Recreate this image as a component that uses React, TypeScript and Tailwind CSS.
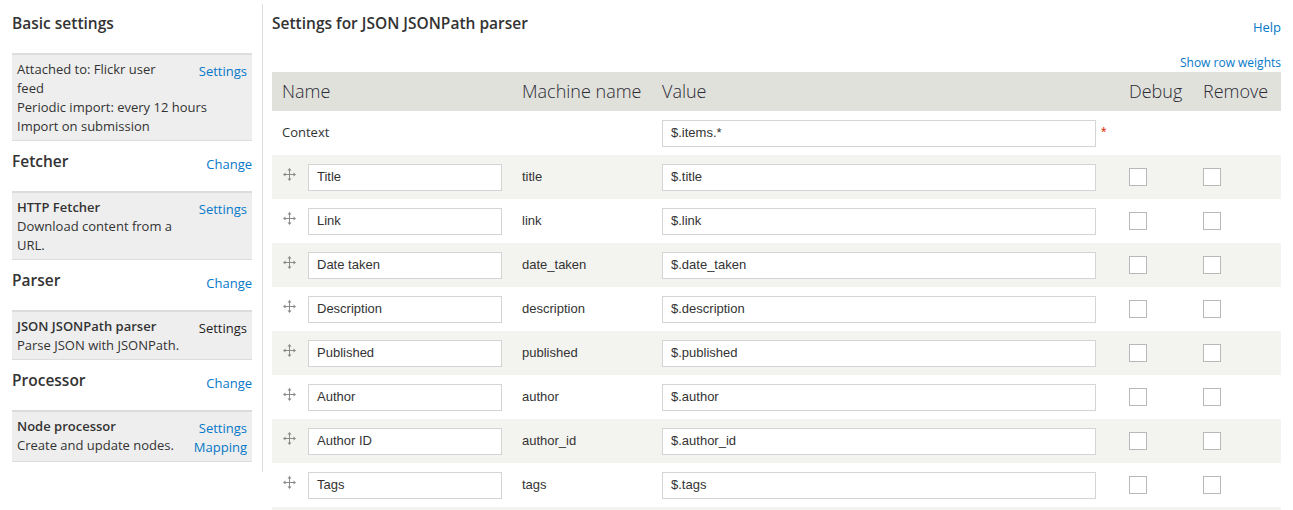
import React from 'react';

const openSans = { fontFamily: '"Open Sans", "Noto Sans", sans-serif' };
const arial = { fontFamily: '"Liberation Sans", Arial, sans-serif' };

type Mapping = { name: string; machine: string; value: string };

const mappings: Mapping[] = [
  { name: 'Title', machine: 'title', value: '$.title' },
  { name: 'Link', machine: 'link', value: '$.link' },
  { name: 'Date taken', machine: 'date_taken', value: '$.date_taken' },
  { name: 'Description', machine: 'description', value: '$.description' },
  { name: 'Published', machine: 'published', value: '$.published' },
  { name: 'Author', machine: 'author', value: '$.author' },
  { name: 'Author ID', machine: 'author_id', value: '$.author_id' },
  { name: 'Tags', machine: 'tags', value: '$.tags' },
];

// Four-way drag handle
function DragHandle() {
  return (
    <svg width="13" height="13" viewBox="0 0 13 13" className="shrink-0">
      <g fill="#8a8a8a">
        <rect x="6" y="1.5" width="1" height="10" />
        <rect x="1.5" y="6" width="10" height="1" />
        <polygon points="6.5,0 8.5,2.5 4.5,2.5" />
        <polygon points="6.5,13 8.5,10.5 4.5,10.5" />
        <polygon points="0,6.5 2.5,4.5 2.5,8.5" />
        <polygon points="13,6.5 10.5,4.5 10.5,8.5" />
      </g>
    </svg>
  );
}

function Checkbox() {
  return <div className="h-[18px] w-[18px] border border-[#b8b8b8] bg-white" />;
}

function SectionHeading({ title, action }: { title: string; action?: string }) {
  return (
    <div className="flex items-end justify-between h-[20px] mb-5">
      <h2 className="text-[15.5px] leading-[20px] font-semibold text-[#333]">{title}</h2>
      {action && (
        <a className="text-[13px] leading-[18px] text-[#0678c8] translate-y-[2px]">{action}</a>
      )}
    </div>
  );
}

function PluginBox({
  links,
  linkIsCurrent,
  children,
}: {
  links: string[];
  linkIsCurrent?: boolean;
  children: React.ReactNode;
}) {
  return (
    <div className="bg-[#eeeeee] border-t-2 border-b border-[#dcdcdc] px-[5px] pt-[5px] pb-[4px] text-[13px] leading-[19px] text-[#333] mb-[10px]">
      <div className="float-right flex flex-col items-end ml-2 pt-[2px] min-h-[38px]">
        {links.map((l) => (
          <a key={l} className={linkIsCurrent ? 'text-[#222]' : 'text-[#0678c8]'}>
            {l}
          </a>
        ))}
      </div>
      {children}
      <div className="clear-both" />
    </div>
  );
}

function Sidebar() {
  return (
    <aside
      className="w-[263px] shrink-0 self-start pl-3 pr-[10px] pt-[9px] border-r border-[#dddddd]"
      style={openSans}
    >
      <SectionHeading title="Basic settings" />
      <PluginBox links={['Settings']}>
        <div className="whitespace-nowrap">Attached to: Flickr user</div>
        <div>feed</div>
        <div className="whitespace-nowrap">Periodic import: every 12 hours</div>
        <div>Import on submission</div>
      </PluginBox>

      <SectionHeading title="Fetcher" action="Change" />
      <PluginBox links={['Settings']}>
        <div className="font-semibold">HTTP Fetcher</div>
        <div className="whitespace-nowrap">Download content from a</div>
        <div>URL.</div>
      </PluginBox>

      <SectionHeading title="Parser" action="Change" />
      <PluginBox links={['Settings']} linkIsCurrent>
        <div className="font-semibold whitespace-nowrap">JSON JSONPath parser</div>
        <div>Parse JSON with JSONPath.</div>
      </PluginBox>

      <SectionHeading title="Processor" action="Change" />
      <PluginBox links={['Settings', 'Mapping']}>
        <div className="font-semibold">Node processor</div>
        <div>Create and update nodes.</div>
      </PluginBox>
    </aside>
  );
}

const gridCols = 'grid grid-cols-[240px_140px_467px_74px_88px]';

function TextInput({ value, width }: { value: string; width: string }) {
  return (
    <div
      className={`${width} h-[27px] border border-[#d4d4d4] bg-white pl-[8px] flex items-center text-[13px] text-[#333]`}
      style={arial}
    >
      {value}
    </div>
  );
}

function MappingTable() {
  return (
    <div className="text-[#333]">
      <div
        className={`${gridCols} h-[39px] items-center bg-[#e1e1dc] text-[18px] font-light text-[#2a2a33]`}
        style={openSans}
      >
        <div className="pl-[10px]">Name</div>
        <div className="pl-[10px]">Machine name</div>
        <div className="pl-[10px]">Value</div>
        <div className="pl-[10px]">Debug</div>
        <div className="pl-[10px]">Remove</div>
      </div>

      <div className={`${gridCols} h-[44px] items-center bg-white`}>
        <div className="pl-[10px] text-[13px]" style={openSans}>
          Context
        </div>
        <div />
        <div className="pl-[10px] flex items-center">
          <TextInput value="$.items.*" width="w-[434px]" />
          <span className="ml-[5px] text-[14px] text-[#e32700] -translate-y-[1px]" style={arial}>
            *
          </span>
        </div>
        <div />
        <div />
      </div>

      {mappings.map((m, i) => (
        <div
          key={m.machine}
          className={`${gridCols} h-[44px] items-center ${i % 2 === 0 ? 'bg-[#f3f3ef]' : 'bg-white'}`}
        >
          <div className="pl-[10px] flex items-center">
            <div className="w-[26px] flex justify-start pl-[1px] -translate-y-[3px]">
              <DragHandle />
            </div>
            <TextInput value={m.name} width="w-[194px]" />
          </div>
          <div className="pl-[10px] text-[13px]" style={arial}>
            {m.machine}
          </div>
          <div className="pl-[10px]">
            <TextInput value={m.value} width="w-[434px]" />
          </div>
          <div className="pl-[10px]">
            <Checkbox />
          </div>
          <div className="pl-[10px]">
            <Checkbox />
          </div>
        </div>
      ))}

      <div className={`${gridCols} h-[44px] bg-[#f3f3ef]`} />
    </div>
  );
}

export default function App() {
  return (
    <div className="w-[1293px] h-[510px] overflow-hidden bg-white flex pt-[4px]">
      <Sidebar />
      <main className="flex-1 pl-[9px] pr-3 pt-[9px]" style={openSans}>
        <div className="flex justify-between h-[20px]">
          <h1 className="text-[15.5px] leading-[20px] font-semibold text-[#333]">
            Settings for JSON JSONPath parser
          </h1>
          <a className="text-[13px] leading-[18px] text-[#0678c8] pt-[5px]">Help</a>
        </div>
        <div className="flex justify-end mt-[22px] mb-[1px]">
          <a className="text-[12px] leading-[16px] text-[#0678c8]">Show row weights</a>
        </div>
        <MappingTable />
      </main>
    </div>
  );
}
